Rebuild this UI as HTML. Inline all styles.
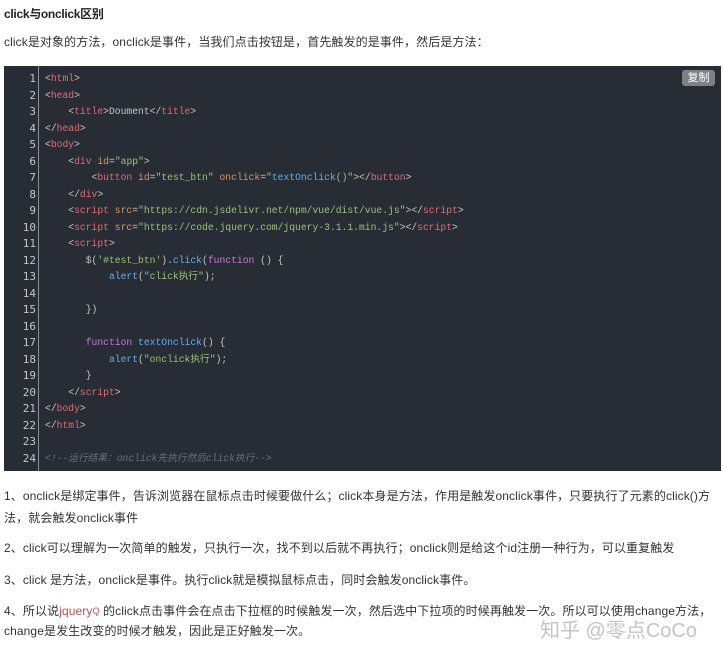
<!DOCTYPE html>
<html><head><meta charset="utf-8">
<style>
*{margin:0;padding:0;box-sizing:border-box}
body{width:723px;height:658px;background:#fff;font-family:"Liberation Sans","Noto Sans CJK SC",sans-serif;color:#333;font-size:12px;position:relative;overflow:hidden}
.t{position:absolute;left:4px;white-space:nowrap;letter-spacing:0.1px;line-height:16px}
h1{position:absolute;left:4px;top:5px;font-size:12px;font-weight:bold;color:#222;letter-spacing:-0.3px}
.code{position:absolute;left:4px;top:66px;width:717px;height:405px;background:#282c34}
.gut{position:absolute;left:0;top:0;width:35px;height:405px;border-right:1px solid #8a8f98}
.ln{position:absolute;left:0;width:32px;text-align:right;font-family:"DejaVu Sans Mono",monospace;font-size:11px;color:#c5c8c6;line-height:16px;height:16px}
.cl{position:absolute;left:41px;white-space:pre;font-family:"Liberation Mono","Noto Sans CJK SC",monospace;font-size:9.7px;color:#c5c8c6;line-height:16px;height:16px}
.tg{color:#e06c75}.s{color:#98c379}.a{color:#d19a66}.f{color:#61afef}.k{color:#c678dd}.c{color:#6a6f78;font-style:italic}
.cp{position:absolute;left:678px;top:4px;width:33px;height:16px;background:#7d8085;border-radius:3px;color:#fff;font-size:11px;text-align:center;line-height:16px}
.wm{position:absolute;left:540px;top:614px;font-size:20px;color:#c4c4c4;letter-spacing:0}
</style></head><body>
<h1>click与onclick区别</h1>
<div class="t" style="top:34px">click是对象的方法，onclick是事件，当我们点击按钮是，首先触发的是事件，然后是方法：</div>
<div class="code">
<div class="gut"></div>
<div class="cp">复制</div>
<div id="lines"></div>
</div>
<div class="t" style="top:488px">1、onclick是绑定事件，告诉浏览器在鼠标点击时候要做什么；click本身是方法，作用是触发onclick事件，只要执行了元素的click()方</div>
<div class="t" style="top:510px">法，就会触发onclick事件</div>
<div class="t" style="top:540px">2、click可以理解为一次简单的触发，只执行一次，找不到以后就不再执行；onclick则是给这个id注册一种行为，可以重复触发</div>
<div class="t" style="top:572px">3、click 是方法，onclick是事件。执行click就是模拟鼠标点击，同时会触发onclick事件。</div>
<div class="t" style="top:603px">4、所以说<span style="color:#c0504d">jquery</span><span style="color:#c0504d;font-size:9px;vertical-align:top">Q</span> 的click点击事件会在点击下拉框的时候触发一次，然后选中下拉项的时候再触发一次。所以可以使用change方法，</div>
<div class="t" style="top:623px">change是发生改变的时候才触发，因此是正好触发一次。</div>
<div class="wm">知乎 @零点CoCo</div>
<script>
var L=[
'&lt;<span class="tg">html</span>&gt;',
'&lt;<span class="tg">head</span>&gt;',
'    &lt;<span class="tg">title</span>&gt;Doument&lt;/<span class="tg">title</span>&gt;',
'&lt;/<span class="tg">head</span>&gt;',
'&lt;<span class="tg">body</span>&gt;',
'    &lt;<span class="tg">div</span> <span class="a">id</span>=<span class="s">"app"</span>&gt;',
'        &lt;<span class="tg">button</span> <span class="a">id</span>=<span class="s">"test_btn"</span> <span class="a">onclick</span>=<span class="s">"<span class="f">textOnclick</span>()"</span>&gt;&lt;/<span class="tg">button</span>&gt;',
'    &lt;/<span class="tg">div</span>&gt;',
'    &lt;<span class="tg">script</span> <span class="a">src</span>=<span class="s">"https://cdn.jsdelivr.net/npm/vue/dist/vue.js"</span>&gt;&lt;/<span class="tg">script</span>&gt;',
'    &lt;<span class="tg">script</span> <span class="a">src</span>=<span class="s">"https://code.jquery.com/jquery-3.1.1.min.js"</span>&gt;&lt;/<span class="tg">script</span>&gt;',
'    &lt;<span class="tg">script</span>&gt;',
'       $(<span class="s">\'#test_btn\'</span>).<span class="f">click</span>(<span class="k">function</span> () {',
'           <span class="f">alert</span>(<span class="s">"click执行"</span>);',
'',
'       })',
'',
'       <span class="k">function</span> <span class="f">textOnclick</span>() {',
'           <span class="f">alert</span>(<span class="s">"onclick执行"</span>);',
'       }',
'    &lt;/<span class="tg">script</span>&gt;',
'&lt;/<span class="tg">body</span>&gt;',
'&lt;/<span class="tg">html</span>&gt;',
'',
'<span class="c">&lt;!--运行结果：onclick先执行然后click执行--&gt;</span>'];
var h='';for(var i=0;i<L.length;i++){var y=5+i*16.5;h+='<div class="ln" style="top:'+y+'px">'+(i+1)+'</div><div class="cl" style="top:'+y+'px">'+L[i]+'</div>';}
document.getElementById('lines').innerHTML=h;
</script>
</body></html>
